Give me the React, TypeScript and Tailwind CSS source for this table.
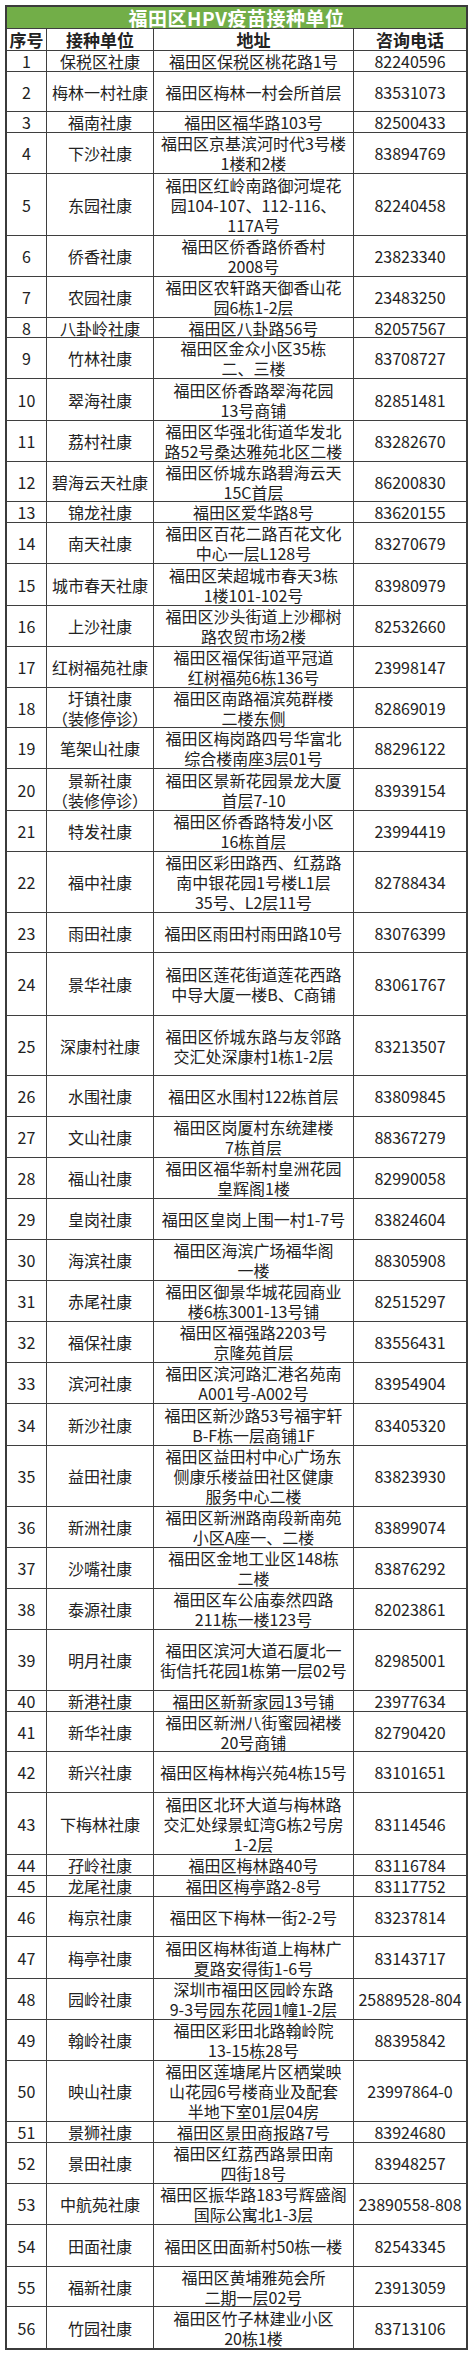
type Row = {
  no: number;
  name: string[];
  addr: string[];
  tel: string;
  h: string;
};

const rows: Row[] = [
  { no: 1, name: ["保税区社康"], addr: ["福田区保税区桃花路1号"], tel: "82240596", h: "h-[21px]" },
  { no: 2, name: ["梅林一村社康"], addr: ["福田区梅林一村会所首层"], tel: "83531073", h: "h-[40px]" },
  { no: 3, name: ["福南社康"], addr: ["福田区福华路103号"], tel: "82500433", h: "h-[21px]" },
  { no: 4, name: ["下沙社康"], addr: ["福田区京基滨河时代3号楼", "1楼和2楼"], tel: "83894769", h: "h-[41px]" },
  { no: 5, name: ["东园社康"], addr: ["福田区红岭南路御河堤花", "园104-107、112-116、", "117A号"], tel: "82240458", h: "h-[62px]" },
  { no: 6, name: ["侨香社康"], addr: ["福田区侨香路侨香村", "2008号"], tel: "23823340", h: "h-[41px]" },
  { no: 7, name: ["农园社康"], addr: ["福田区农轩路天御香山花", "园6栋1-2层"], tel: "23483250", h: "h-[41px]" },
  { no: 8, name: ["八卦岭社康"], addr: ["福田区八卦路56号"], tel: "82057567", h: "h-[20px]" },
  { no: 9, name: ["竹林社康"], addr: ["福田区金众小区35栋", "二、三楼"], tel: "83708727", h: "h-[41px]" },
  { no: 10, name: ["翠海社康"], addr: ["福田区侨香路翠海花园", "13号商铺"], tel: "82851481", h: "h-[42px]" },
  { no: 11, name: ["荔村社康"], addr: ["福田区华强北街道华发北", "路52号桑达雅苑北区二楼"], tel: "83282670", h: "h-[41px]" },
  { no: 12, name: ["碧海云天社康"], addr: ["福田区侨城东路碧海云天", "15C首层"], tel: "86200830", h: "h-[40px]" },
  { no: 13, name: ["锦龙社康"], addr: ["福田区爱华路8号"], tel: "83620155", h: "h-[21px]" },
  { no: 14, name: ["南天社康"], addr: ["福田区百花二路百花文化", "中心一层L128号"], tel: "83270679", h: "h-[41px]" },
  { no: 15, name: ["城市春天社康"], addr: ["福田区荣超城市春天3栋", "1楼101-102号"], tel: "83980979", h: "h-[42px]" },
  { no: 16, name: ["上沙社康"], addr: ["福田区沙头街道上沙椰树", "路农贸市场2楼"], tel: "82532660", h: "h-[41px]" },
  { no: 17, name: ["红树福苑社康"], addr: ["福田区福保街道平冠道", "红树福苑6栋136号"], tel: "23998147", h: "h-[41px]" },
  { no: 18, name: ["圩镇社康", "（装修停诊）"], addr: ["福田区南路福滨苑群楼", "二楼东侧"], tel: "82869019", h: "h-[40px]" },
  { no: 19, name: ["笔架山社康"], addr: ["福田区梅岗路四号华富北", "综合楼南座3层01号"], tel: "88296122", h: "h-[41px]" },
  { no: 20, name: ["景新社康", "（装修停诊）"], addr: ["福田区景新花园景龙大厦", "首层7-10"], tel: "83939154", h: "h-[42px]" },
  { no: 21, name: ["特发社康"], addr: ["福田区侨香路特发小区", "16栋首层"], tel: "23994419", h: "h-[41px]" },
  { no: 22, name: ["福中社康"], addr: ["福田区彩田路西、红荔路", "南中银花园1号楼L1层", "35号、L2层11号"], tel: "82788434", h: "h-[61px]" },
  { no: 23, name: ["雨田社康"], addr: ["福田区雨田村雨田路10号"], tel: "83076399", h: "h-[40px]" },
  { no: 24, name: ["景华社康"], addr: ["福田区莲花街道莲花西路", "中导大厦一楼B、C商铺"], tel: "83061767", h: "h-[63px]" },
  { no: 25, name: ["深康村社康"], addr: ["福田区侨城东路与友邻路", "交汇处深康村1栋1-2层"], tel: "83213507", h: "h-[60px]" },
  { no: 26, name: ["水围社康"], addr: ["福田区水围村122栋首层"], tel: "83809845", h: "h-[41px]" },
  { no: 27, name: ["文山社康"], addr: ["福田区岗厦村东统建楼", "7栋首层"], tel: "88367279", h: "h-[41px]" },
  { no: 28, name: ["福山社康"], addr: ["福田区福华新村皇洲花园", "皇辉阁1楼"], tel: "82990058", h: "h-[41px]" },
  { no: 29, name: ["皇岗社康"], addr: ["福田区皇岗上围一村1-7号"], tel: "83824604", h: "h-[41px]" },
  { no: 30, name: ["海滨社康"], addr: ["福田区海滨广场福华阁", "一楼"], tel: "88305908", h: "h-[41px]" },
  { no: 31, name: ["赤尾社康"], addr: ["福田区御景华城花园商业", "楼6栋3001-13号铺"], tel: "82515297", h: "h-[41px]" },
  { no: 32, name: ["福保社康"], addr: ["福田区福强路2203号", "京隆苑首层"], tel: "83556431", h: "h-[41px]" },
  { no: 33, name: ["滨河社康"], addr: ["福田区滨河路汇港名苑南", "A001号-A002号"], tel: "83954904", h: "h-[41px]" },
  { no: 34, name: ["新沙社康"], addr: ["福田区新沙路53号福宇轩", "B-F栋一层商铺1F"], tel: "83405320", h: "h-[42px]" },
  { no: 35, name: ["益田社康"], addr: ["福田区益田村中心广场东", "侧康乐楼益田社区健康", "服务中心二楼"], tel: "83823930", h: "h-[61px]" },
  { no: 36, name: ["新洲社康"], addr: ["福田区新洲路南段新南苑", "小区A座一、二楼"], tel: "83899074", h: "h-[41px]" },
  { no: 37, name: ["沙嘴社康"], addr: ["福田区金地工业区148栋", "二楼"], tel: "83876292", h: "h-[41px]" },
  { no: 38, name: ["泰源社康"], addr: ["福田区车公庙泰然四路", "211栋一楼123号"], tel: "82023861", h: "h-[41px]" },
  { no: 39, name: ["明月社康"], addr: ["福田区滨河大道石厦北一", "街信托花园1栋第一层02号"], tel: "82985001", h: "h-[61px]" },
  { no: 40, name: ["新港社康"], addr: ["福田区新新家园13号铺"], tel: "23977634", h: "h-[21px]" },
  { no: 41, name: ["新华社康"], addr: ["福田区新洲八街蜜园裙楼", "20号商铺"], tel: "82790420", h: "h-[40px]" },
  { no: 42, name: ["新兴社康"], addr: ["福田区梅林梅兴苑4栋15号"], tel: "83101651", h: "h-[41px]" },
  { no: 43, name: ["下梅林社康"], addr: ["福田区北环大道与梅林路", "交汇处绿景虹湾G栋2号房", "1-2层"], tel: "83114546", h: "h-[62px]" },
  { no: 44, name: ["孖岭社康"], addr: ["福田区梅林路40号"], tel: "83116784", h: "h-[21px]" },
  { no: 45, name: ["龙尾社康"], addr: ["福田区梅亭路2-8号"], tel: "83117752", h: "h-[21px]" },
  { no: 46, name: ["梅京社康"], addr: ["福田区下梅林一街2-2号"], tel: "83237814", h: "h-[40px]" },
  { no: 47, name: ["梅亭社康"], addr: ["福田区梅林街道上梅林广", "夏路安得街1-6号"], tel: "83143717", h: "h-[42px]" },
  { no: 48, name: ["园岭社康"], addr: ["深圳市福田区园岭东路", "9-3号园东花园1幢1-2层"], tel: "25889528-804", h: "h-[41px]" },
  { no: 49, name: ["翰岭社康"], addr: ["福田区彩田北路翰岭院", "13-15栋28号"], tel: "88395842", h: "h-[41px]" },
  { no: 50, name: ["映山社康"], addr: ["福田区莲塘尾片区栖棠映", "山花园6号楼商业及配套", "半地下室01层04房"], tel: "23997864-0", h: "h-[61px]" },
  { no: 51, name: ["景狮社康"], addr: ["福田区景田商报路7号"], tel: "83924680", h: "h-[21px]" },
  { no: 52, name: ["景田社康"], addr: ["福田区红荔西路景田南", "四街18号"], tel: "83948257", h: "h-[41px]" },
  { no: 53, name: ["中航苑社康"], addr: ["福田区振华路183号辉盛阁", "国际公寓北1-3层"], tel: "23890558-808", h: "h-[41px]" },
  { no: 54, name: ["田面社康"], addr: ["福田区田面新村50栋一楼"], tel: "82543345", h: "h-[42px]" },
  { no: 55, name: ["福新社康"], addr: ["福田区黄埔雅苑会所", "二期一层02号"], tel: "23913059", h: "h-[40px]" },
  { no: 56, name: ["竹园社康"], addr: ["福田区竹子林建业小区", "20栋1楼"], tel: "83713106", h: "h-[41px]" },
];

function Cell({ lines, last }: { lines: string[]; last?: boolean }) {
  return (
    <div
      className={`flex flex-col items-center justify-center whitespace-nowrap text-center ${
        last ? "" : "border-r border-[#3f3f3f]"
      }`}
    >
      {lines.map((l) => (
        <span key={l}>{l}</span>
      ))}
    </div>
  );
}

export default function App() {
  return (
    <div className="bg-white pt-[5px] pl-[5px] pb-[3px]">
      <div
        className="w-[463px] border-2 border-[#3b3b3b] text-[16px] leading-[20px] text-[#222222]"
        style={{ fontFamily: '"Noto Sans CJK SC", "Noto Sans", sans-serif' }}
      >
        {/* title bar */}
        <div className="flex h-[22px] items-center justify-center border-b border-[#3f3f3f] bg-[#72ae48] text-[19px] font-bold leading-[21px] tracking-[0.5px] text-white">
          <span>福田区HPV疫苗接种单位</span>
        </div>

        {/* header */}
        <div className="grid h-[22px] grid-cols-[40px_107px_200px_112px] border-b border-[#3f3f3f] text-[17px] font-bold leading-[21px]">
          <Cell lines={["序号"]} />
          <Cell lines={["接种单位"]} />
          <Cell lines={["地址"]} />
          <Cell lines={["咨询电话"]} last />
        </div>

        {rows.map((r, i) => (
          <div
            key={r.no}
            className={`grid grid-cols-[40px_107px_200px_112px] ${r.h} ${
              i === rows.length - 1 ? "" : "border-b border-[#3f3f3f]"
            }`}
          >
            <Cell lines={[String(r.no)]} />
            <Cell lines={r.name} />
            <Cell lines={r.addr} />
            <Cell lines={[r.tel]} last />
          </div>
        ))}
      </div>
    </div>
  );
}
